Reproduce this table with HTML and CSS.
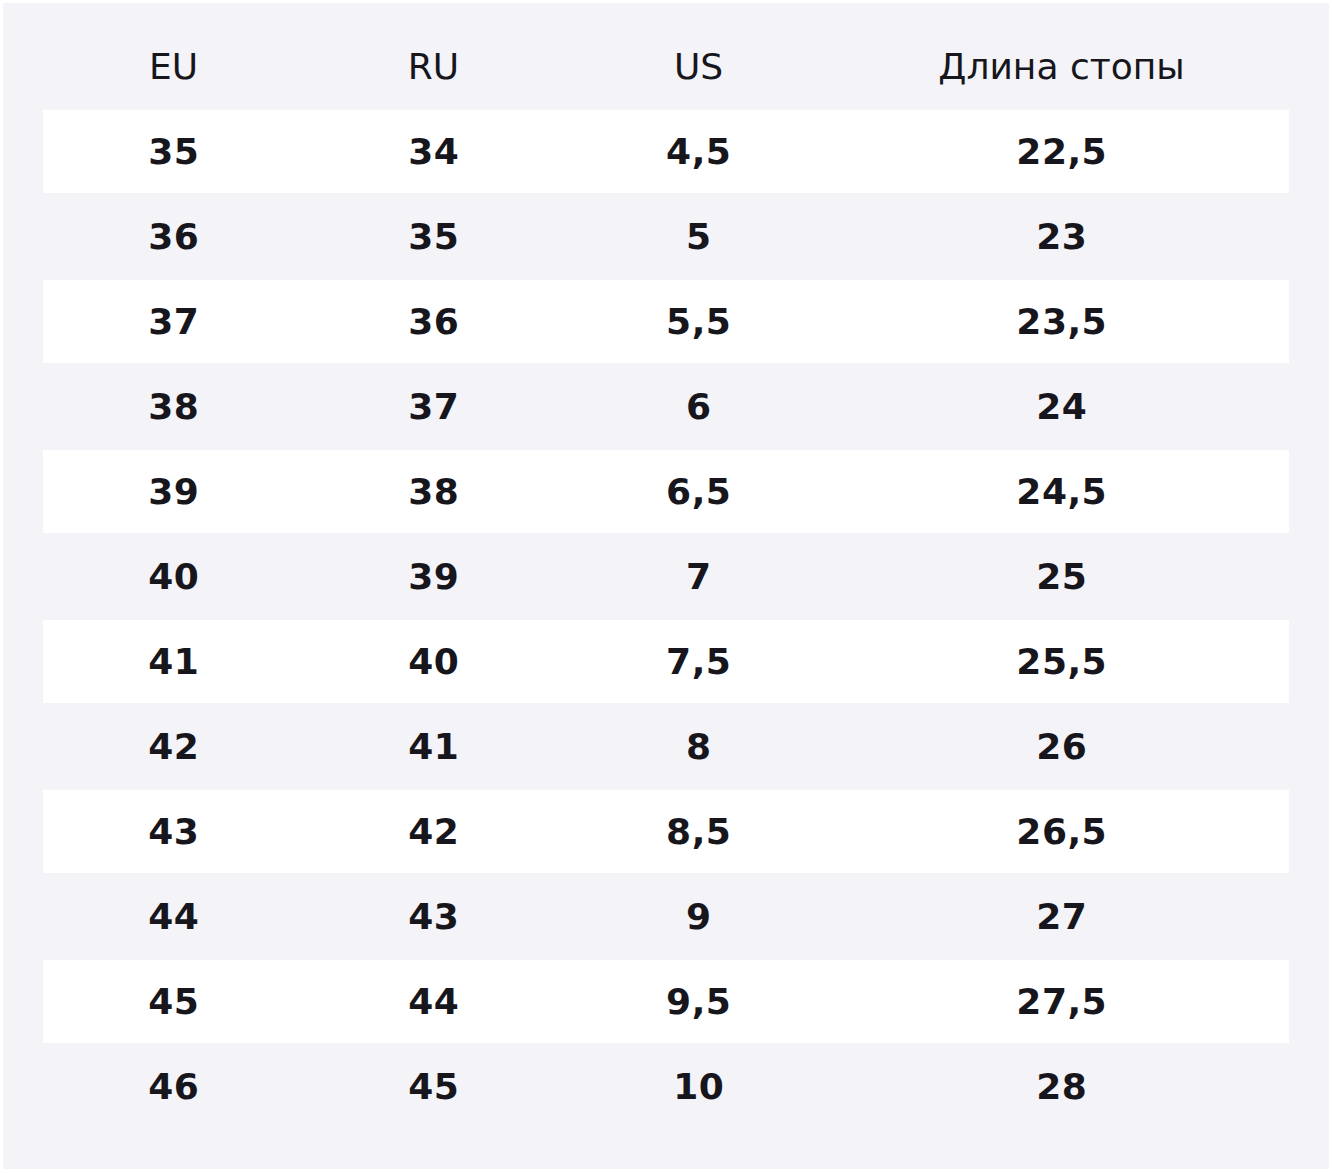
FILE: index.html
```html
<!DOCTYPE html>
<html lang="ru">
<head>
<meta charset="utf-8">
<title>Таблица размеров</title>
<link rel="stylesheet" href="styles.css">
</head>
<body>
<div class="panel">
  <div class="table">
    <div class="row head"><div>EU</div><div>RU</div><div>US</div><div>Длина стопы</div></div>
    <div class="row odd"><div>35</div><div>34</div><div>4,5</div><div>22,5</div></div>
    <div class="row"><div>36</div><div>35</div><div>5</div><div>23</div></div>
    <div class="row odd"><div>37</div><div>36</div><div>5,5</div><div>23,5</div></div>
    <div class="row"><div>38</div><div>37</div><div>6</div><div>24</div></div>
    <div class="row odd"><div>39</div><div>38</div><div>6,5</div><div>24,5</div></div>
    <div class="row"><div>40</div><div>39</div><div>7</div><div>25</div></div>
    <div class="row odd"><div>41</div><div>40</div><div>7,5</div><div>25,5</div></div>
    <div class="row"><div>42</div><div>41</div><div>8</div><div>26</div></div>
    <div class="row odd"><div>43</div><div>42</div><div>8,5</div><div>26,5</div></div>
    <div class="row"><div>44</div><div>43</div><div>9</div><div>27</div></div>
    <div class="row odd"><div>45</div><div>44</div><div>9,5</div><div>27,5</div></div>
    <div class="row"><div>46</div><div>45</div><div>10</div><div>28</div></div>
  </div>
</div>
</body>
</html>
```
FILE: styles.css
```css
html, body {
  background: #ffffff;
}
body {
  margin: 3px;
  font-family: "DejaVu Sans", sans-serif;
  color: #17161c;
}
.panel {
  width: 1326px;
  box-sizing: border-box;
  background: #f3f3f8;
  padding: 21px 40px 40px 40px;
}
.table {
  display: flex;
  flex-direction: column;
}
.row {
  display: grid;
  grid-template-columns: 260px 260px 270px 456px;
  height: 85px;
  align-items: center;
  text-align: center;
  font-size: 36px;
  font-weight: bold;
  letter-spacing: 0.5px;
  box-sizing: border-box;
}
.row > div {
  padding-left: 1.5px;
}
.row.head {
  font-weight: normal;
  letter-spacing: 0;
}
.row.head > div {
  padding-left: 1px;
}
.row.odd {
  padding: 1px 0;
  background: #ffffff;
  background-clip: content-box;
}
```
